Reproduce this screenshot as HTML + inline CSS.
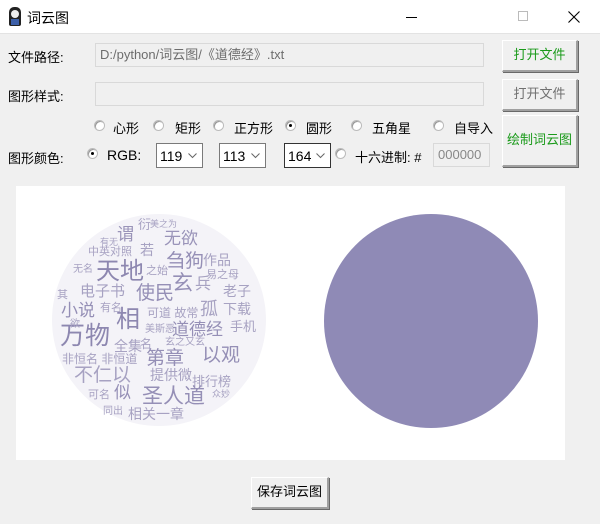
<!DOCTYPE html>
<html><head><meta charset="utf-8"><style>
*{margin:0;padding:0;box-sizing:border-box}
body{width:600px;height:524px;background:#f0f0f0;position:relative;overflow:hidden;font-family:"Liberation Sans","Noto Sans CJK SC",sans-serif;font-size:13px;color:#000}
.a{position:absolute;white-space:nowrap}
.title{left:0;top:0;width:600px;height:34px;background:#fff;border-bottom:1px solid #e3e3e3}
.entry{position:absolute;background:#f0f0f0;border:1px solid #d9d9d9;height:24px;color:#6d6d6d;padding:2px 4px;line-height:18px;font-size:13px}
.btn{position:absolute;background:#f0f0f0;border:1px solid #fff;border-right:2px solid #a0a0a0;border-bottom:2px solid #a0a0a0;box-shadow:1px 1px 0 #696969;text-align:center;font-size:13px}
.rad{position:absolute;width:11px;height:11px;border-radius:50%;border:1px solid #bbb;background:#fff;box-shadow:inset 1px 1px 0 #999}
.dot::after{content:"";position:absolute;left:3px;top:3px;width:3px;height:3px;border-radius:50%;background:#000}
.cb{position:absolute;background:#fff;border:1px solid #7a7a7a;height:25px;font-size:14px;padding:3px 3px;line-height:18px}
.cb svg{position:absolute;right:5px;top:9px}
.w{position:absolute;white-space:nowrap;color:#a7a2c2;line-height:1}
</style></head><body>
<div class="a title"></div>
<div class="a" style="left:9px;top:7px;width:12px;height:19px;background:#222;border-radius:5px 5px 2px 2px"></div>
<div class="a" style="left:11px;top:10px;width:8px;height:8px;background:#eee;border-radius:50%"></div>
<div class="a" style="left:11px;top:19px;width:8px;height:6px;background:#3c5fa8"></div>
<div class="a" style="left:27px;top:8px;font-size:14px">词云图</div>
<div class="a" style="left:406px;top:17px;width:11px;height:1px;background:#000"></div>
<div class="a" style="left:518px;top:11px;width:10px;height:10px;border:1px solid #bbb"></div>
<svg class="a" style="left:568px;top:11px" width="12" height="12"><path d="M0.5 0.5L11.5 11.5M11.5 0.5L0.5 11.5" stroke="#000" stroke-width="1.1"/></svg>

<div class="a" style="left:8px;top:47px">文件路径:</div>
<div class="entry" style="left:95px;top:43px;width:389px">D:/python/词云图/《道德经》.txt</div>
<div class="btn" style="left:502px;top:40px;width:76px;height:32px;line-height:28px;color:#1a9a1a">打开文件</div>

<div class="a" style="left:8px;top:86px">图形样式:</div>
<div class="entry" style="left:95px;top:82px;width:389px"></div>
<div class="btn" style="left:502px;top:79px;width:76px;height:32px;line-height:28px;color:#707070">打开文件</div>

<div class="rad" style="left:94px;top:120px"></div><div class="a" style="left:113px;top:118px">心形</div>
<div class="rad" style="left:153px;top:120px"></div><div class="a" style="left:175px;top:118px">矩形</div>
<div class="rad" style="left:213px;top:120px"></div><div class="a" style="left:234px;top:118px">正方形</div>
<div class="rad dot" style="left:285px;top:120px"></div><div class="a" style="left:306px;top:118px">圆形</div>
<div class="rad" style="left:351px;top:120px"></div><div class="a" style="left:372px;top:118px">五角星</div>
<div class="rad" style="left:433px;top:120px"></div><div class="a" style="left:454px;top:118px">自导入</div>
<div class="btn" style="left:502px;top:115px;width:76px;height:52px;line-height:48px;color:#1a9a1a">绘制词云图</div>

<div class="a" style="left:8px;top:148px">图形颜色:</div>
<div class="rad dot" style="left:87px;top:148px"></div><div class="a" style="left:107px;top:147px;font-size:14px">RGB:</div>
<div class="cb" style="left:156px;top:143px;width:47px">119<svg width="9" height="6"><path d="M0.5 0.5L4.5 4.5L8.5 0.5" stroke="#666" fill="none"/></svg></div>
<div class="cb" style="left:219px;top:143px;width:47px">113<svg width="9" height="6"><path d="M0.5 0.5L4.5 4.5L8.5 0.5" stroke="#666" fill="none"/></svg></div>
<div class="cb" style="left:284px;top:143px;width:47px;border-color:#333">164<svg width="9" height="6"><path d="M0.5 0.5L4.5 4.5L8.5 0.5" stroke="#666" fill="none"/></svg></div>
<div class="rad" style="left:335px;top:148px"></div><div class="a" style="left:355px;top:147px">十六进制: #</div>
<div class="entry" style="left:433px;top:143px;width:57px;font-size:13px;color:#888">000000</div>

<div class="a" style="left:16px;top:186px;width:549px;height:274px;background:#fff"></div>
<div class="a" style="left:324px;top:214px;width:214px;height:214px;border-radius:50%;background:#8f8ab6"></div>
<div class="a" style="left:52px;top:214px;width:214px;height:212px;border-radius:50%;background:#f4f3f8"></div>

<div class="w" style="left:96px;top:260px;font-size:24px;color:#8d87b0">天地</div>
<div class="w" style="left:60px;top:324px;font-size:25px;color:#8d87b0">万物</div>
<div class="w" style="left:116px;top:308px;font-size:24px;color:#8d87b0">相</div>
<div class="w" style="left:61px;top:302px;font-size:17px;color:#958fb6">小说</div>
<div class="w" style="left:80px;top:284px;font-size:15px">电子书</div>
<div class="w" style="left:136px;top:284px;font-size:19px;color:#958fb6">使民</div>
<div class="w" style="left:172px;top:273px;font-size:21px;color:#958fb6">玄</div>
<div class="w" style="left:195px;top:277px;font-size:16px">兵</div>
<div class="w" style="left:164px;top:230px;font-size:17px;color:#9a94b9">无欲</div>
<div class="w" style="left:166px;top:252px;font-size:19px;color:#958fb6">刍狗</div>
<div class="w" style="left:203px;top:253px;font-size:14px">作品</div>
<div class="w" style="left:117px;top:226px;font-size:17px;color:#9a94b9">谓</div>
<div class="w" style="left:88px;top:247px;font-size:11px">中英对照</div>
<div class="w" style="left:73px;top:265px;font-size:10px">无名</div>
<div class="w" style="left:140px;top:243px;font-size:14px">若</div>
<div class="w" style="left:138px;top:218px;font-size:13px">衍</div>
<div class="w" style="left:206px;top:270px;font-size:11px">易之母</div>
<div class="w" style="left:223px;top:284px;font-size:14px">老子</div>
<div class="w" style="left:223px;top:302px;font-size:14px">下载</div>
<div class="w" style="left:200px;top:300px;font-size:18px">孤</div>
<div class="w" style="left:172px;top:321px;font-size:17px;color:#958fb6">道德经</div>
<div class="w" style="left:147px;top:307px;font-size:12px">可道 故常</div>
<div class="w" style="left:100px;top:303px;font-size:11px">有名</div>
<div class="w" style="left:70px;top:320px;font-size:10px">欲</div>
<div class="w" style="left:114px;top:339px;font-size:14px">全集</div>
<div class="w" style="left:146px;top:349px;font-size:19px;color:#958fb6">第章</div>
<div class="w" style="left:202px;top:346px;font-size:19px;color:#958fb6">以观</div>
<div class="w" style="left:62px;top:353px;font-size:12px">非恒名 非恒道</div>
<div class="w" style="left:74px;top:366px;font-size:19px">不仁以</div>
<div class="w" style="left:150px;top:368px;font-size:14px">提供微</div>
<div class="w" style="left:192px;top:375px;font-size:13px">排行榜</div>
<div class="w" style="left:114px;top:384px;font-size:17px;color:#958fb6">似</div>
<div class="w" style="left:142px;top:386px;font-size:21px;color:#958fb6">圣人道</div>
<div class="w" style="left:88px;top:390px;font-size:11px">可名</div>
<div class="w" style="left:103px;top:407px;font-size:10px">同出</div>
<div class="w" style="left:128px;top:407px;font-size:14px">相关一章</div>
<div class="w" style="left:212px;top:390px;font-size:9px">众妙</div>
<div class="w" style="left:165px;top:338px;font-size:10px">玄之又玄</div>
<div class="w" style="left:230px;top:320px;font-size:13px">手机</div>
<div class="w" style="left:150px;top:220px;font-size:9px">美之为</div>
<div class="w" style="left:100px;top:238px;font-size:9px">有无</div>
<div class="w" style="left:145px;top:325px;font-size:10px">美斯恶</div>
<div class="w" style="left:140px;top:338px;font-size:12px">名</div>
<div class="w" style="left:57px;top:290px;font-size:11px">其</div>
<div class="w" style="left:146px;top:266px;font-size:11px">之始</div>

<div class="btn" style="left:251px;top:477px;width:78px;height:32px;line-height:28px">保存词云图</div>
</body></html>
